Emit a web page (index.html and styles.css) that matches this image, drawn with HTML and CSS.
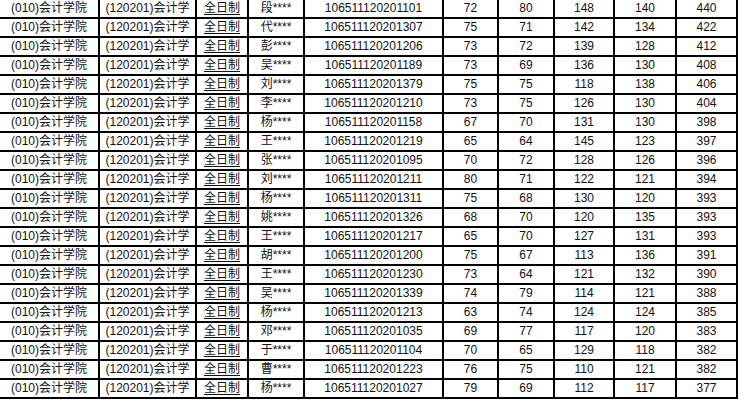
FILE: index.html
```html
<!DOCTYPE html>
<html lang="zh">
<head>
<meta charset="utf-8">
<title>成绩表</title>
<link rel="stylesheet" href="styles.css">
</head>
<body>
<div class="sheet">
<div class="row"><div class="c">(010)会计学院</div><div class="c">(120201)会计学</div><div class="c u">全日制</div><div class="c">段****</div><div class="c">106511120201101</div><div class="c">72</div><div class="c">80</div><div class="c">148</div><div class="c">140</div><div class="c">440</div></div>
<div class="row"><div class="c">(010)会计学院</div><div class="c">(120201)会计学</div><div class="c u">全日制</div><div class="c">代****</div><div class="c">106511120201307</div><div class="c">75</div><div class="c">71</div><div class="c">142</div><div class="c">134</div><div class="c">422</div></div>
<div class="row"><div class="c">(010)会计学院</div><div class="c">(120201)会计学</div><div class="c u">全日制</div><div class="c">彭****</div><div class="c">106511120201206</div><div class="c">73</div><div class="c">72</div><div class="c">139</div><div class="c">128</div><div class="c">412</div></div>
<div class="row"><div class="c">(010)会计学院</div><div class="c">(120201)会计学</div><div class="c u">全日制</div><div class="c">吴****</div><div class="c">106511120201189</div><div class="c">73</div><div class="c">69</div><div class="c">136</div><div class="c">130</div><div class="c">408</div></div>
<div class="row"><div class="c">(010)会计学院</div><div class="c">(120201)会计学</div><div class="c u">全日制</div><div class="c">刘****</div><div class="c">106511120201379</div><div class="c">75</div><div class="c">75</div><div class="c">118</div><div class="c">138</div><div class="c">406</div></div>
<div class="row"><div class="c">(010)会计学院</div><div class="c">(120201)会计学</div><div class="c u">全日制</div><div class="c">李****</div><div class="c">106511120201210</div><div class="c">73</div><div class="c">75</div><div class="c">126</div><div class="c">130</div><div class="c">404</div></div>
<div class="row"><div class="c">(010)会计学院</div><div class="c">(120201)会计学</div><div class="c u">全日制</div><div class="c">杨****</div><div class="c">106511120201158</div><div class="c">67</div><div class="c">70</div><div class="c">131</div><div class="c">130</div><div class="c">398</div></div>
<div class="row"><div class="c">(010)会计学院</div><div class="c">(120201)会计学</div><div class="c u">全日制</div><div class="c">王****</div><div class="c">106511120201219</div><div class="c">65</div><div class="c">64</div><div class="c">145</div><div class="c">123</div><div class="c">397</div></div>
<div class="row"><div class="c">(010)会计学院</div><div class="c">(120201)会计学</div><div class="c u">全日制</div><div class="c">张****</div><div class="c">106511120201095</div><div class="c">70</div><div class="c">72</div><div class="c">128</div><div class="c">126</div><div class="c">396</div></div>
<div class="row"><div class="c">(010)会计学院</div><div class="c">(120201)会计学</div><div class="c u">全日制</div><div class="c">刘****</div><div class="c">106511120201211</div><div class="c">80</div><div class="c">71</div><div class="c">122</div><div class="c">121</div><div class="c">394</div></div>
<div class="row"><div class="c">(010)会计学院</div><div class="c">(120201)会计学</div><div class="c u">全日制</div><div class="c">杨****</div><div class="c">106511120201311</div><div class="c">75</div><div class="c">68</div><div class="c">130</div><div class="c">120</div><div class="c">393</div></div>
<div class="row"><div class="c">(010)会计学院</div><div class="c">(120201)会计学</div><div class="c u">全日制</div><div class="c">姚****</div><div class="c">106511120201326</div><div class="c">68</div><div class="c">70</div><div class="c">120</div><div class="c">135</div><div class="c">393</div></div>
<div class="row"><div class="c">(010)会计学院</div><div class="c">(120201)会计学</div><div class="c u">全日制</div><div class="c">王****</div><div class="c">106511120201217</div><div class="c">65</div><div class="c">70</div><div class="c">127</div><div class="c">131</div><div class="c">393</div></div>
<div class="row"><div class="c">(010)会计学院</div><div class="c">(120201)会计学</div><div class="c u">全日制</div><div class="c">胡****</div><div class="c">106511120201200</div><div class="c">75</div><div class="c">67</div><div class="c">113</div><div class="c">136</div><div class="c">391</div></div>
<div class="row"><div class="c">(010)会计学院</div><div class="c">(120201)会计学</div><div class="c u">全日制</div><div class="c">王****</div><div class="c">106511120201230</div><div class="c">73</div><div class="c">64</div><div class="c">121</div><div class="c">132</div><div class="c">390</div></div>
<div class="row"><div class="c">(010)会计学院</div><div class="c">(120201)会计学</div><div class="c u">全日制</div><div class="c">吴****</div><div class="c">106511120201339</div><div class="c">74</div><div class="c">79</div><div class="c">114</div><div class="c">121</div><div class="c">388</div></div>
<div class="row"><div class="c">(010)会计学院</div><div class="c">(120201)会计学</div><div class="c u">全日制</div><div class="c">杨****</div><div class="c">106511120201213</div><div class="c">63</div><div class="c">74</div><div class="c">124</div><div class="c">124</div><div class="c">385</div></div>
<div class="row"><div class="c">(010)会计学院</div><div class="c">(120201)会计学</div><div class="c u">全日制</div><div class="c">邓****</div><div class="c">106511120201035</div><div class="c">69</div><div class="c">77</div><div class="c">117</div><div class="c">120</div><div class="c">383</div></div>
<div class="row"><div class="c">(010)会计学院</div><div class="c">(120201)会计学</div><div class="c u">全日制</div><div class="c">于****</div><div class="c">106511120201104</div><div class="c">70</div><div class="c">65</div><div class="c">129</div><div class="c">118</div><div class="c">382</div></div>
<div class="row"><div class="c">(010)会计学院</div><div class="c">(120201)会计学</div><div class="c u">全日制</div><div class="c">曹****</div><div class="c">106511120201223</div><div class="c">76</div><div class="c">75</div><div class="c">110</div><div class="c">121</div><div class="c">382</div></div>
<div class="row"><div class="c">(010)会计学院</div><div class="c">(120201)会计学</div><div class="c u">全日制</div><div class="c">杨****</div><div class="c">106511120201027</div><div class="c">79</div><div class="c">69</div><div class="c">112</div><div class="c">117</div><div class="c">377</div></div>
</div>
</body>
</html>
```
FILE: styles.css
```css
html, body {
  margin: 0;
  padding: 0;
  background: #fff;
}
body {
  font-family: "Liberation Sans", Arial, "Noto Sans CJK SC", sans-serif;
  font-size: 12px;
  color: #000;
}
.sheet {
  display: flex;
  flex-direction: column;
  gap: 2px;
  width: fit-content;
  background: #000;
  padding: 0 2px 2px 0;
}
.row {
  display: grid;
  grid-template-columns: 98px 95px 50px 54px 137px 53px 54px 58px 60px 59px;
  column-gap: 2px;
  height: 17px;
}
.c {
  background: #fff;
  text-align: center;
  line-height: 17px;
  white-space: nowrap;
  overflow: hidden;
  color: #111;
}
.u {
  text-decoration: underline;
  text-decoration-thickness: 1px;
  text-underline-offset: 2px;
}
```
